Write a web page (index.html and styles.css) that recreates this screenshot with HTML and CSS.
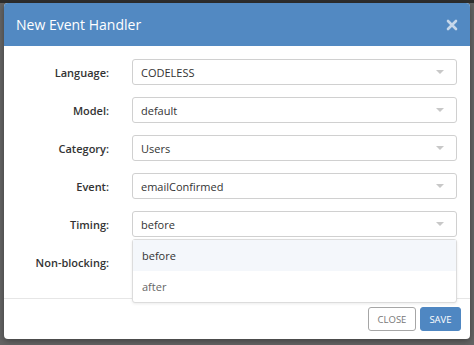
FILE: index.html
```html
<!DOCTYPE html>
<html lang="en">
<head>
    <meta charset="UTF-8">
    <meta name="viewport" content="width=device-width, initial-scale=1.0">
    <title>New Event Handler</title>
    <link rel="stylesheet" href="styles.css">
</head>
<body>
    <div class="backdrop-strip"></div>
    <div class="modal">
        <header class="modal-header">
            <h1 class="modal-title">New Event Handler</h1>
            <svg class="modal-close" viewBox="0 0 12 12">
                <path d="M2 2L10 10M10 2L2 10"></path>
            </svg>
        </header>

        <div class="modal-body">
            <div class="form-row">
                <label class="form-label">Language:</label>
                <div class="select"><span>CODELESS</span><i class="caret"></i></div>
            </div>
            <div class="form-row">
                <label class="form-label">Model:</label>
                <div class="select"><span>default</span><i class="caret"></i></div>
            </div>
            <div class="form-row">
                <label class="form-label">Category:</label>
                <div class="select"><span>Users</span><i class="caret"></i></div>
            </div>
            <div class="form-row">
                <label class="form-label">Event:</label>
                <div class="select"><span>emailConfirmed</span><i class="caret"></i></div>
            </div>
            <div class="form-row">
                <label class="form-label">Timing:</label>
                <div class="select-wrap">
                    <div class="select is-open"><span>before</span><i class="caret"></i></div>
                    <ul class="dropdown">
                        <li class="dropdown-item is-active">before</li>
                        <li class="dropdown-item">after</li>
                    </ul>
                </div>
            </div>
            <div class="form-row">
                <label class="form-label">Non-blocking:</label>
                <div class="checkbox-slot"></div>
            </div>
        </div>

        <footer class="modal-footer">
            <button class="btn btn-close">Close</button>
            <button class="btn btn-save">Save</button>
        </footer>
    </div>
</body>
</html>
```

FILE: styles.css
```css
* {
    margin: 0;
    padding: 0;
    box-sizing: border-box;
    font-family: "Open Sans", "Liberation Sans", sans-serif;
}

body {
    background: #646464;
    width: 474px;
    height: 345px;
    overflow: hidden;
    padding: 3px 4px 0 4px;
    position: relative;
}

.backdrop-strip {
    position: absolute;
    top: 0;
    left: 0;
    right: 0;
    height: 3px;
    background: #2e2e2e;
}

.modal {
    position: relative;
    width: 466px;
    height: 336px;
    background: #fff;
    border-radius: 4px;
    box-shadow: 0 2px 6px rgba(0, 0, 0, 0.35);
    display: flex;
    flex-direction: column;
}

.modal-header {
    height: 43px;
    background: #5289c2;
    border-radius: 4px 4px 0 0;
    display: flex;
    align-items: center;
    justify-content: space-between;
    padding: 0 12px 0 12px;
}

.modal-title {
    color: #fff;
    font-size: 14px;
    font-weight: 400;
}

.modal-close {
    width: 12px;
    height: 12px;
    stroke: #c6d7ea;
    stroke-width: 2.6;
    stroke-linecap: round;
    fill: none;
}

.modal-body {
    flex: 1;
    padding: 13px 13px 0 0;
    display: flex;
    flex-direction: column;
    gap: 12px;
}

.form-row {
    display: flex;
    align-items: center;
    height: 26px;
}

.form-label {
    width: 105px;
    text-align: right;
    font-size: 11px;
    font-weight: 600;
    color: #333;
    margin-right: 23px;
}

.select-wrap {
    flex: 1;
    position: relative;
}

.select {
    flex: 1;
    height: 26px;
    border: 1px solid #d0d0d0;
    border-radius: 3px;
    display: flex;
    align-items: center;
    justify-content: space-between;
    padding: 0 12px 0 8px;
    font-size: 11px;
    color: #333;
}

.caret {
    width: 0;
    height: 0;
    border-left: 4px solid transparent;
    border-right: 4px solid transparent;
    border-top: 4px solid #c8c8c8;
}

.dropdown {
    position: absolute;
    top: 28px;
    left: 0;
    right: 0;
    list-style: none;
    background: #fff;
    border: 1px solid #dcdcdc;
    border-radius: 3px;
    box-shadow: 0 1px 3px rgba(0, 0, 0, 0.08);
    z-index: 2;
}

.dropdown-item {
    height: 31px;
    display: flex;
    align-items: center;
    padding-left: 9px;
    font-size: 11px;
    color: #666;
}

.dropdown-item.is-active {
    background: #f4f7fb;
    color: #333;
}

.checkbox-slot {
    flex: 1;
}

.modal-footer {
    border-top: 1px solid #e6e6e6;
    padding: 8px 9px 8px 0;
    display: flex;
    justify-content: flex-end;
    gap: 4px;
}

.btn {
    height: 24px;
    border-radius: 3px;
    font-size: 9.5px;
    text-transform: uppercase;
    cursor: pointer;
}

.btn-close {
    width: 48px;
    background: #fff;
    border: 1px solid #a6a6a6;
    color: #777;
}

.btn-save {
    width: 41px;
    background: #4f87c2;
    border: 1px solid #4f87c2;
    color: #fff;
}
```
